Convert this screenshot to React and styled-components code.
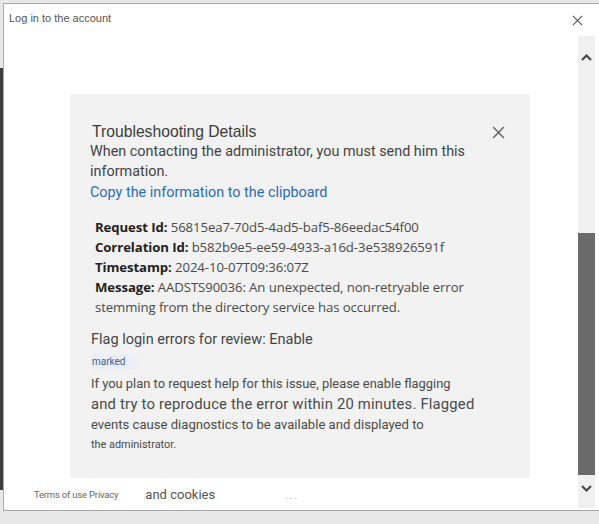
import React from "react";
import styled, { createGlobalStyle } from "styled-components";

const GlobalStyle = createGlobalStyle`
  html, body {
    margin: 0;
    padding: 0;
    width: 599px;
    height: 524px;
    overflow: hidden;
  }
  body {
    font-family: Roboto, "Liberation Sans", Arial, sans-serif;
    background: #e8e8e8;
  }
`;

const Backdrop = styled.div`
  width: 599px;
  height: 524px;
  box-sizing: border-box;
  padding: 3px 0 0 3px;
  background: linear-gradient(#3d3d3d, #3d3d3d) 0 68px / 3px 422px no-repeat,
    #e8e8e8;
`;

const Window = styled.div`
  width: 597px;
  height: 508px;
  box-sizing: border-box;
  border: 1px solid #a9a9a9;
  border-right-color: #fff;
  background: #fff;
  display: flex;
  flex-direction: column;
`;

const TitleBar = styled.div`
  height: 32px;
  flex: none;
  display: flex;
  align-items: center;
  justify-content: space-between;
  padding: 0 16px 0 5px;
`;

const WindowTitle = styled.div`
  font-family: "Liberation Sans", Arial, sans-serif;
  font-size: 11px;
  color: #555;
  margin-top: -5px;
`;

const IconButton = styled.button`
  border: 0;
  background: none;
  padding: 0;
  display: flex;
  align-items: center;
  justify-content: center;
  width: ${({ $size }) => $size}px;
  height: ${({ $size }) => $size}px;
  color: ${({ $color }) => $color || "#555"};
  cursor: pointer;
`;

const Body = styled.div`
  flex: 1;
  display: flex;
  min-height: 0;
  padding-right: 4px;
`;

const Main = styled.div`
  flex: 1;
  display: flex;
  flex-direction: column;
  padding: 58px 0 0 66px;
`;

const Panel = styled.div`
  width: 460px;
  height: 384px;
  flex: none;
  box-sizing: border-box;
  background: #f2f2f2;
  padding: 28px 25px 0 20px;
  color: #444;
`;

const PanelHeader = styled.div`
  display: flex;
  align-items: center;
  justify-content: space-between;
  height: 20px;
`;

const PanelTitle = styled.h2`
  margin: 0 0 0 2px;
  font-family: "Liberation Sans", Arial, sans-serif;
  font-weight: 400;
  font-size: 15.7px;
  line-height: 20px;
  color: #3c3c3c;
`;

const Text = styled.p`
  margin: ${({ $mt }) => $mt || 0}px 0 0 ${({ $ml }) => $ml || 0}px;
  font-size: ${({ $size }) => $size || 14.4}px;
  line-height: 20px;
  color: #444;
  white-space: nowrap;
`;

const CopyLink = styled.a`
  display: block;
  font-size: 14.4px;
  line-height: 22px;
  color: #2b6cb4;
  text-decoration: none;
  cursor: pointer;
`;

const Details = styled.div`
  margin-top: 13px;
  padding-left: 5px;
  font-family: "Open Sans", "Noto Sans", sans-serif;
  font-size: 13.2px;
  line-height: 20px;
  color: #4a4a4a;
  letter-spacing: -0.1px;
`;

const Label = styled.b`
  font-weight: 700;
  color: #222;
`;

const Marked = styled.span`
  display: inline-block;
  margin: 2px 0 0 1px;
  padding: 0 18px 0 1px;
  font-size: 10px;
  line-height: 16px;
  color: #3d5f99;
  background: linear-gradient(90deg, #eaeef6 70%, rgba(234, 238, 246, 0));
  border-radius: 6px;
`;

const Paragraph = styled.div`
  margin-top: 4px;
  padding-left: 1px;
`;

const Line = styled.div`
  font-size: ${({ $size }) => $size}px;
  line-height: 20.3px;
  color: #4a4a4a;
  letter-spacing: ${({ $spacing }) => $spacing || 0}px;
  white-space: nowrap;
`;

const Footer = styled.div`
  flex: 1;
  display: flex;
  align-items: center;
  margin-left: -36px;
  color: #666;
`;

const FooterLink = styled.a`
  font-size: ${({ $size }) => $size}px;
  margin-right: ${({ $gap }) => $gap}px;
  color: ${({ $color }) => $color || "#666"};
  text-decoration: none;
  letter-spacing: ${({ $spacing }) => $spacing || 0}px;
`;

const Dots = styled.span`
  font-size: 10px;
  color: #aaa;
  letter-spacing: 2px;
  margin-top: 2px;
`;

const ScrollTrack = styled.div`
  width: 17px;
  flex: none;
  background: #f0f0f0;
  display: flex;
  flex-direction: column;
  align-items: center;
  padding: 11px 0 10px;
  box-sizing: border-box;
  margin-bottom: 2px;
`;

const ScrollArrow = styled.div`
  height: 20px;
  width: 17px;
  display: flex;
  align-items: center;
  justify-content: center;
  flex: none;
`;

const Rail = styled.div`
  flex: 1;
  width: 17px;
  position: relative;
`;

const Thumb = styled.div`
  position: absolute;
  left: 0;
  right: 0;
  background: #6a6a6a;
`;

const Cross = ({ size, stroke = 1.3 }) => (
  <svg width={size} height={size} viewBox="0 0 12 12" fill="none">
    <path d="M1 1L11 11M11 1L1 11" stroke="currentColor" strokeWidth={stroke} />
  </svg>
);

const Chevron = ({ up }) => (
  <svg width="11" height="7" viewBox="0 0 11 7" fill="none">
    <path
      d={up ? "M1 6L5.5 1.5L10 6" : "M1 1L5.5 5.5L10 1"}
      stroke="#484848"
      strokeWidth="2.2"
    />
  </svg>
);

const details = [
  ["Request Id:", "56815ea7-70d5-4ad5-baf5-86eedac54f00"],
  ["Correlation Id:", "b582b9e5-ee59-4933-a16d-3e538926591f"],
  ["Timestamp:", "2024-10-07T09:36:07Z"],
  ["Message:", "AADSTS90036: An unexpected, non-retryable error"],
];

const helpLines = [
  { text: "If you plan to request help for this issue, please enable flagging", size: 12.9 },
  { text: "and try to reproduce the error within 20 minutes. Flagged", size: 14.8, spacing: 0.2 },
  { text: "events cause diagnostics to be available and displayed to", size: 13.1 },
  { text: "the administrator.", size: 10.9 },
];

export default function App() {
  const thumb = { top: 166, height: 242 };

  return (
    <>
      <GlobalStyle />
      <Backdrop>
        <Window>
          <TitleBar>
            <WindowTitle>Log in to the account</WindowTitle>
            <IconButton $size={12} aria-label="Close">
              <Cross size={11} stroke={1.2} />
            </IconButton>
          </TitleBar>
          <Body>
            <Main>
              <Panel>
                <PanelHeader>
                  <PanelTitle>Troubleshooting Details</PanelTitle>
                  <IconButton $size={14} $color="#666" aria-label="Close details">
                    <Cross size={13} stroke={1.4} />
                  </IconButton>
                </PanelHeader>
                <Text>
                  When contacting the administrator, you must send him this
                  <br />
                  information.
                </Text>
                <CopyLink>Copy the information to the clipboard</CopyLink>
                <Details>
                  {details.map(([label, value]) => (
                    <div key={label}>
                      <Label>{label}</Label> {value}
                    </div>
                  ))}
                  <div>stemming from the directory service has occurred.</div>
                </Details>
                <Text $mt={13} $ml={1} $size={14.5}>
                  Flag login errors for review: Enable
                </Text>
                <Marked>marked</Marked>
                <Paragraph>
                  {helpLines.map((l) => (
                    <Line key={l.text} $size={l.size} $spacing={l.spacing}>
                      {l.text}
                    </Line>
                  ))}
                </Paragraph>
              </Panel>
              <Footer>
                <FooterLink $size={9.5} $gap={27} $spacing={-0.2}>
                  Terms of use Privacy
                </FooterLink>
                <FooterLink $size={13} $gap={70} $color="#555">
                  and cookies
                </FooterLink>
                <Dots>...</Dots>
              </Footer>
            </Main>
            <ScrollTrack>
              <ScrollArrow>
                <Chevron up />
              </ScrollArrow>
              <Rail>
                <Thumb style={{ top: thumb.top, height: thumb.height }} />
              </Rail>
              <ScrollArrow>
                <Chevron />
              </ScrollArrow>
            </ScrollTrack>
          </Body>
        </Window>
      </Backdrop>
    </>
  );
}
